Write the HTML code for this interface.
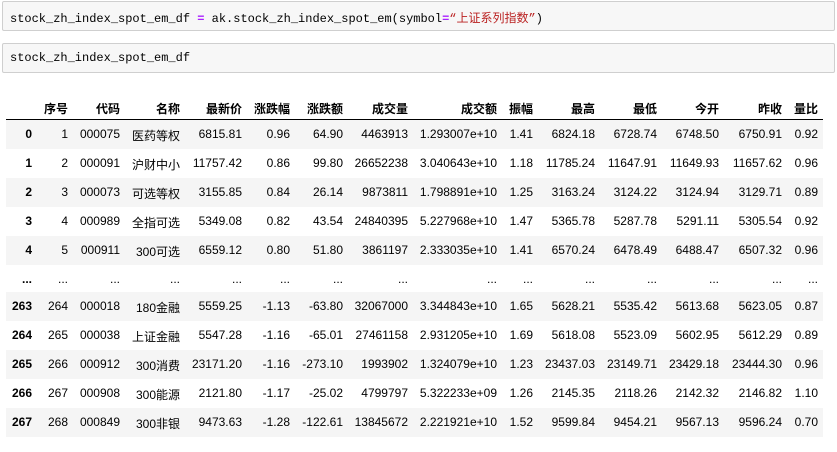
<!DOCTYPE html>
<html><head><meta charset="utf-8">
<style>
body{margin:0;width:837px;height:452px;background:#fff;overflow:hidden;position:relative;font-family:"Liberation Sans","Noto Sans CJK SC",sans-serif;font-size:12px;color:#000}
.cell{position:absolute;left:2px;width:831px;height:28px;background:#f7f7f7;border:1px solid #cfcfcf;border-radius:2px}
.code{position:absolute;left:7px;top:7px;font-family:"Liberation Mono","Noto Sans CJK SC",monospace;font-size:12px;white-space:pre}
.op{color:#aa22ff;font-weight:bold}
.str{color:#ba2121}
.row{position:absolute;left:6px;width:817px;height:29px}
.row.g{background:#f5f5f5}
.row span{position:absolute;top:7px;text-align:right;white-space:nowrap}
.hdr span{font-weight:bold}
.idx{font-weight:bold}
.line{position:absolute;left:6px;width:817px;top:119px;height:1px;background:#000}
</style></head><body>
<div class="cell" style="top:1px"><div class="code">stock_zh_index_spot_em_df <span class="op">=</span> ak.stock_zh_index_spot_em(symbol<span class="op">=</span><span class="str">“上证系列指数”</span>)</div></div>
<div class="cell" style="top:43px"><div class="code">stock_zh_index_spot_em_df</div></div>
<div id="t"></div>
<div class="line"></div>
<script>
var R=[32,68,120,180,242,290,343,408,497,533,595,657,719,782,818];
function row(top,cls,vals,bold){
 var d=document.createElement('div');d.className='row '+cls;d.style.top=top+'px';
 var h='';
 for(var i=0;i<vals.length;i++){
  var r=R[i]-6;
  h+='<span'+((bold&&i==0)?' class="idx"':'')+' style="right:'+(817-r)+'px'+(vals[i]=='...'&&i==0?';font-weight:bold':'')+'">'+vals[i]+'</span>';
 }
 d.innerHTML=h;document.getElementById('t').appendChild(d);
}
row(93,'hdr',['','序号','代码','名称','最新价','涨跌幅','涨跌额','成交量','成交额','振幅','最高','最低','今开','昨收','量比']);
var data=[
['0','1','000075','医药等权','6815.81','0.96','64.90','4463913','1.293007e+10','1.41','6824.18','6728.74','6748.50','6750.91','0.92'],
['1','2','000091','沪财中小','11757.42','0.86','99.80','26652238','3.040643e+10','1.18','11785.24','11647.91','11649.93','11657.62','0.96'],
['2','3','000073','可选等权','3155.85','0.84','26.14','9873811','1.798891e+10','1.25','3163.24','3124.22','3124.94','3129.71','0.89'],
['3','4','000989','全指可选','5349.08','0.82','43.54','24840395','5.227968e+10','1.47','5365.78','5287.78','5291.11','5305.54','0.92'],
['4','5','000911','300可选','6559.12','0.80','51.80','3861197','2.333035e+10','1.41','6570.24','6478.49','6488.47','6507.32','0.96']];
var data2=[
['263','264','000018','180金融','5559.25','-1.13','-63.80','32067000','3.344843e+10','1.65','5628.21','5535.42','5613.68','5623.05','0.87'],
['264','265','000038','上证金融','5547.28','-1.16','-65.01','27461158','2.931205e+10','1.69','5618.08','5523.09','5602.95','5612.29','0.89'],
['265','266','000912','300消费','23171.20','-1.16','-273.10','1993902','1.324079e+10','1.23','23437.03','23149.71','23429.18','23444.30','0.96'],
['266','267','000908','300能源','2121.80','-1.17','-25.02','4799797','5.322233e+09','1.26','2145.35','2118.26','2142.32','2146.82','1.10'],
['267','268','000849','300非银','9473.63','-1.28','-122.61','13845672','2.221921e+10','1.52','9599.84','9454.21','9567.13','9596.24','0.70']];
for(var i=0;i<5;i++)row(120+i*29,i%2==0?'g':'',data[i],true);
var e=[];for(var k=0;k<15;k++)e.push('...');
row(265,'',e,true);
for(var i=0;i<5;i++)row(292+i*29,i%2==0?'g':'',data2[i],true);
</script>
</body></html>
